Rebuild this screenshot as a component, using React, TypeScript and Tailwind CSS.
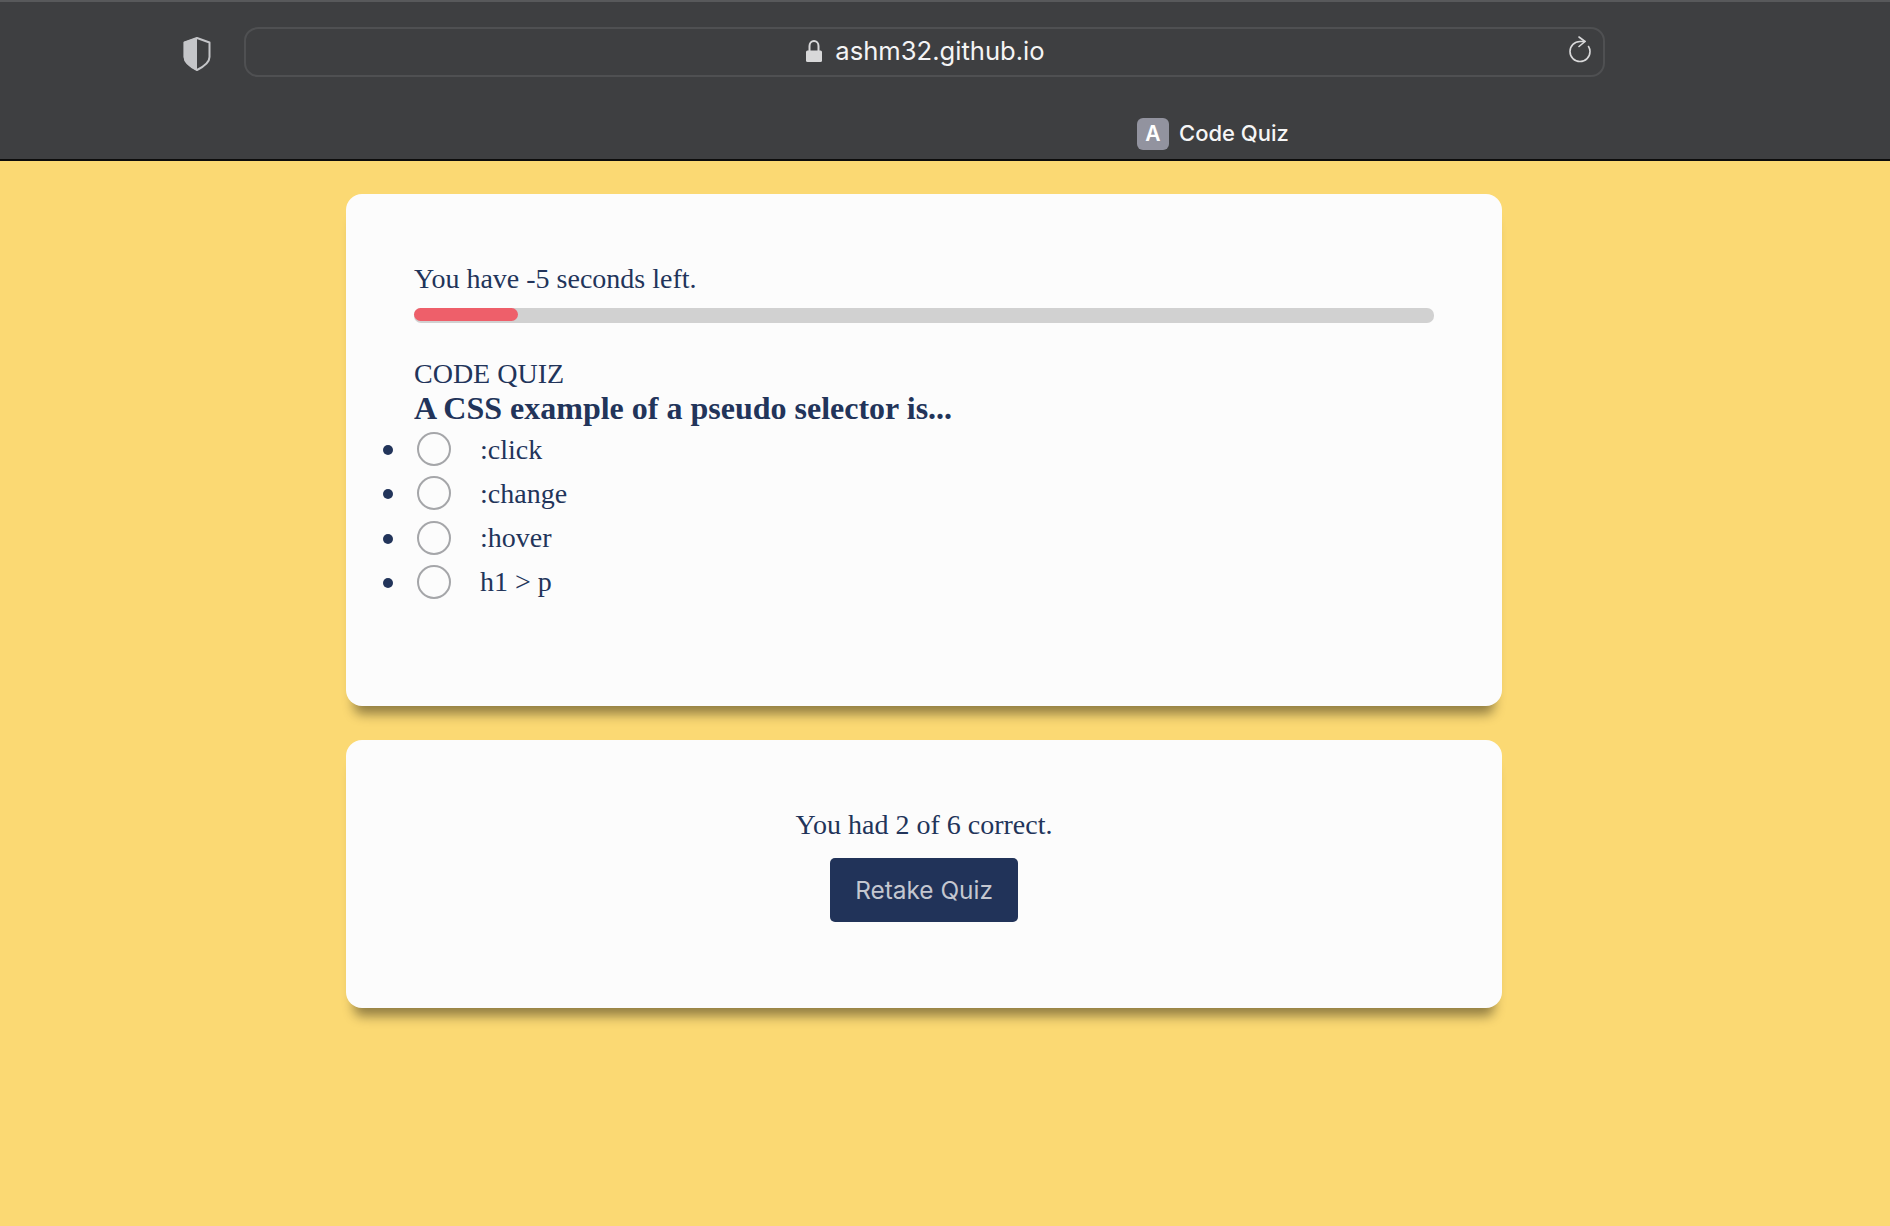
const serif = "font-['Liberation_Serif',serif]";

const answers = [":click", ":change", ":hover", "h1 > p"];

function ShieldIcon() {
  return (
    <svg width="28" height="34" viewBox="0 0 28 34" fill="none" className="ml-[183px] mt-[35px]">
      <path d="M14 1 L26.5 5.5 V20 C26.5 25 21 29.5 14 33 C7 29.5 1.500 25 1.500 20 V5.500 Z" stroke="#c4c5c8" strokeWidth="2" strokeLinejoin="round" />
      <path d="M14 0.500 L0.800 5 V20 C0.800 25.500 7 30 14 33.500 Z" fill="#c4c5c8" />
    </svg>
  );
}

function LockIcon() {
  return (
    <svg width="16" height="22" viewBox="0 0 16 22" fill="none">
      <path d="M3.500 11 V6 C3.500 3 5.500 1 8 1 C10.500 1 12.500 3 12.500 6 V11" stroke="#d8d8d9" strokeWidth="2" />
      <rect x="0" y="10.500" width="16" height="11.500" rx="1.500" fill="#d8d8d9" />
    </svg>
  );
}

function ReloadIcon() {
  return (
    <svg width="22" height="27" viewBox="0 0 22 27" fill="none" stroke="#d9d9da" strokeWidth="1.600" strokeLinecap="round" strokeLinejoin="round">
      <path d="M16 5.500 H11 A10 10 0 1 0 21 15.500 C21 13.500 20.500 12 19.500 10.500" />
      <path d="M10 1 L16 5.500 L10 10.500" />
    </svg>
  );
}

function Toolbar() {
  return (
    <header className="h-[161px] bg-[#3e3f41] border-t-2 border-t-[#58595b] border-b-2 border-b-[#0c0c0c] font-['Inter',sans-serif]">
      <div className="flex items-start">
        <ShieldIcon />
        <div className="ml-[33px] mt-[25px] h-[50px] w-[1361px] rounded-[14px] border-2 border-[#4f5052] grid grid-cols-[1fr_auto_1fr] items-center pl-[14px] pr-[12px]">
          <span />
          <div className="flex items-center gap-[13px] mb-[2px] text-[25.6px] text-[#f4f4f5]">
            <LockIcon />
            <span>ashm32.github.io</span>
          </div>
          <div className="flex justify-end mb-[6px]">
            <ReloadIcon />
          </div>
        </div>
      </div>
      <div className="mt-[40px] ml-[1137px] flex items-center gap-[10px]">
        <span className="w-[32px] h-[32px] rounded-[6px] bg-[#92939f] text-white text-[21px] font-semibold flex items-center justify-center">A</span>
        <span className="text-[22px] font-medium text-[#f6f6f6]">Code Quiz</span>
      </div>
    </header>
  );
}

function QuizCard() {
  return (
    <section className="h-[512px] rounded-[16px] bg-[#fcfcfc] shadow-[0_16px_12px_-8px_rgba(0,0,0,0.42)] p-[68px] pt-[69px] text-[#22345a]">
      <p className="text-[28px] leading-[32px]">You have -5 seconds left.</p>
      <div className="mt-[13px] h-[15px] rounded-[7px] bg-[#d1d1d1]">
        <div className="h-[13px] w-[104px] rounded-[7px] bg-[#ee5f6a]" />
      </div>
      <h2 className="mt-[34px] text-[28px] leading-[33px]">CODE QUIZ</h2>
      <h1 className="text-[32px] leading-[36px] font-bold">A CSS example of a pseudo selector is...</h1>
      <ul className="mt-[6px] -ml-[31px] text-[28px]">
        {answers.map((answer) => (
          <li key={answer} className="h-[44.33px] leading-[33px]">
            <label className="flex items-center">
              <span className="w-[10px] h-[10px] mt-[2px] rounded-full bg-[#22345a]" />
              <input type="radio" name="answer" className="appearance-none w-[34px] h-[34px] ml-[24px] rounded-full border-2 border-[#a5a6a9]" />
              <span className="ml-[29px]">{answer}</span>
            </label>
          </li>
        ))}
      </ul>
    </section>
  );
}

function ResultCard() {
  return (
    <section className="h-[268px] rounded-[16px] bg-[#fcfcfc] shadow-[0_16px_12px_-8px_rgba(0,0,0,0.42)] pt-[69px] flex flex-col items-center text-[#22345a]">
      <p className="text-[28px] leading-[32px]">You had 2 of 6 correct.</p>
      <button type="button" className="mt-[17px] w-[188px] h-[64px] pt-[1px] rounded-[5px] bg-[#213359] text-[#c4c7d0] text-[24.4px] font-['Inter',sans-serif]">
        Retake Quiz
      </button>
    </section>
  );
}

export default function App() {
  return (
    <div className={`min-h-[1226px] bg-[#fbd973] ${serif}`}>
      <Toolbar />
      <main className="ml-[346px] w-[1156px] pt-[33px] flex flex-col gap-[34px]">
        <QuizCard />
        <ResultCard />
      </main>
    </div>
  );
}
